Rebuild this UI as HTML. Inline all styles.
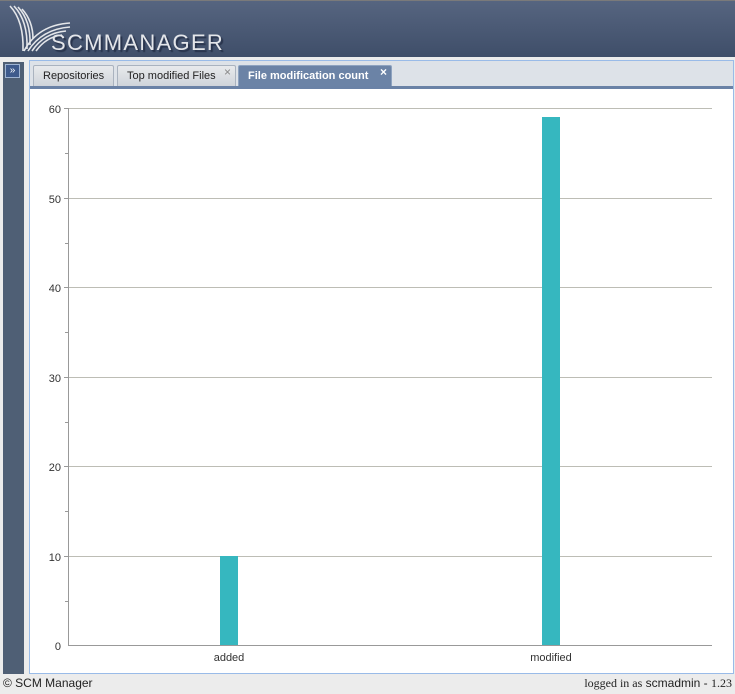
<!DOCTYPE html>
<html><head><style>
body{margin:0;width:735px;height:694px;background:#ececec;position:relative;overflow:hidden;font-family:"Liberation Sans",sans-serif}
.hdr{position:absolute;left:0;top:0;width:735px;height:57px;background:linear-gradient(#566580,#3f4e69);border-top:1px solid #7a7a7a;box-sizing:border-box}
.logo{position:absolute;left:51px;top:29px;font-size:22px;letter-spacing:1.3px;color:#e4e6ea;text-shadow:2px 2px 1px #27324a}
.side{position:absolute;left:3px;top:62px;width:21px;height:612px;background:#4f5f75}
.btn{position:absolute;left:5px;top:64px;width:15px;height:14px;background:#3e5a8c;border:1px solid #9fb4d3;box-sizing:border-box;color:#fff;font-size:10px;line-height:11px;text-align:center}
.panel{position:absolute;left:29px;top:60px;width:705px;height:614px;border:1px solid #99bbe8;box-sizing:border-box;background:#fff}
.strip{position:absolute;left:0;top:0;width:703px;height:28px;background:#dde2e8;border-bottom:3px solid #6a82a6;box-sizing:border-box}
.tab{position:absolute;top:4px;height:21px;background:linear-gradient(#e8eaec,#cfd4da);border:1px solid #aab3bf;border-bottom:none;font-size:11px;color:#222;line-height:20px;padding-left:9px;box-sizing:border-box;border-radius:2px 2px 0 0}
.tab.a{background:#6b83a6;color:#fff;font-weight:bold;border-color:#8ea3c0}
.x{position:absolute;right:4px;top:-4px;font-size:12px;color:#888}
.a .x{color:#fff}
.foot{position:absolute;top:676px;font-size:12px;color:#222}
</style></head><body>
<div class="hdr">
<svg width="80" height="57" style="position:absolute;left:0;top:0" fill="none" stroke="#e4e6ea" stroke-width="1.6">
<path d="M10 5 Q24 20 23 50"/><path d="M14 5 Q28 20 27 48"/><path d="M18 6 Q31 20 30 44"/><path d="M22 8 Q33 20 33 38"/>
<path d="M24 50 Q38 24 70 22"/><path d="M28 50 Q42 28 70 26"/><path d="M32 50 Q44 32 66 30"/><path d="M36 50 Q46 36 62 34"/>
</svg>
<div class="logo">SCMMANAGER</div>
</div>
<div class="side"></div>
<div class="btn">»</div>
<div class="panel">
<div class="strip">
<div class="tab" style="left:3px;width:81px">Repositories</div>
<div class="tab" style="left:87px;width:119px">Top modified Files<span class="x">×</span></div>
<div class="tab a" style="left:208px;width:154px">File modification count<span class="x">×</span></div>
</div>
</div>
<svg width="735" height="694" style="position:absolute;left:0;top:0" font-family="Liberation Sans, sans-serif" font-size="11" fill="#333">
<g stroke="#bdbdb5" stroke-width="1">
<line x1="68" y1="108.5" x2="712" y2="108.5"/><line x1="68" y1="198.5" x2="712" y2="198.5"/><line x1="68" y1="287.5" x2="712" y2="287.5"/><line x1="68" y1="377.5" x2="712" y2="377.5"/><line x1="68" y1="466.5" x2="712" y2="466.5"/><line x1="68" y1="556.5" x2="712" y2="556.5"/>
</g>
<g stroke="#999" stroke-width="1">
<line x1="68.5" y1="108" x2="68.5" y2="645"/><line x1="68" y1="645.5" x2="712" y2="645.5"/>
<line x1="65" y1="153.5" x2="68" y2="153.5"/><line x1="65" y1="243.5" x2="68" y2="243.5"/><line x1="65" y1="332.5" x2="68" y2="332.5"/><line x1="65" y1="422.5" x2="68" y2="422.5"/><line x1="65" y1="511.5" x2="68" y2="511.5"/><line x1="65" y1="601.5" x2="68" y2="601.5"/>
<line x1="64" y1="108.5" x2="68" y2="108.5"/><line x1="64" y1="198.5" x2="68" y2="198.5"/><line x1="64" y1="287.5" x2="68" y2="287.5"/><line x1="64" y1="377.5" x2="68" y2="377.5"/><line x1="64" y1="466.5" x2="68" y2="466.5"/><line x1="64" y1="556.5" x2="68" y2="556.5"/>
</g>
<g text-anchor="end">
<text x="61" y="113">60</text><text x="61" y="203">50</text><text x="61" y="292">40</text><text x="61" y="382">30</text><text x="61" y="471">20</text><text x="61" y="561">10</text><text x="61" y="650">0</text>
</g>
<rect x="220" y="556" width="18" height="89" fill="#36b7bf"/>
<rect x="542" y="117" width="18" height="528" fill="#36b7bf"/>
<text x="229" y="661" text-anchor="middle">added</text>
<text x="551" y="661" text-anchor="middle">modified</text>
</svg>
<div class="foot" style="left:3px">© SCM Manager</div>
<div class="foot" style="right:3px"><span style="font-family:'Liberation Serif',serif">logged in as</span> scmadmin - <span style="font-family:'Liberation Serif',serif">1.23</span></div>
</body></html>
